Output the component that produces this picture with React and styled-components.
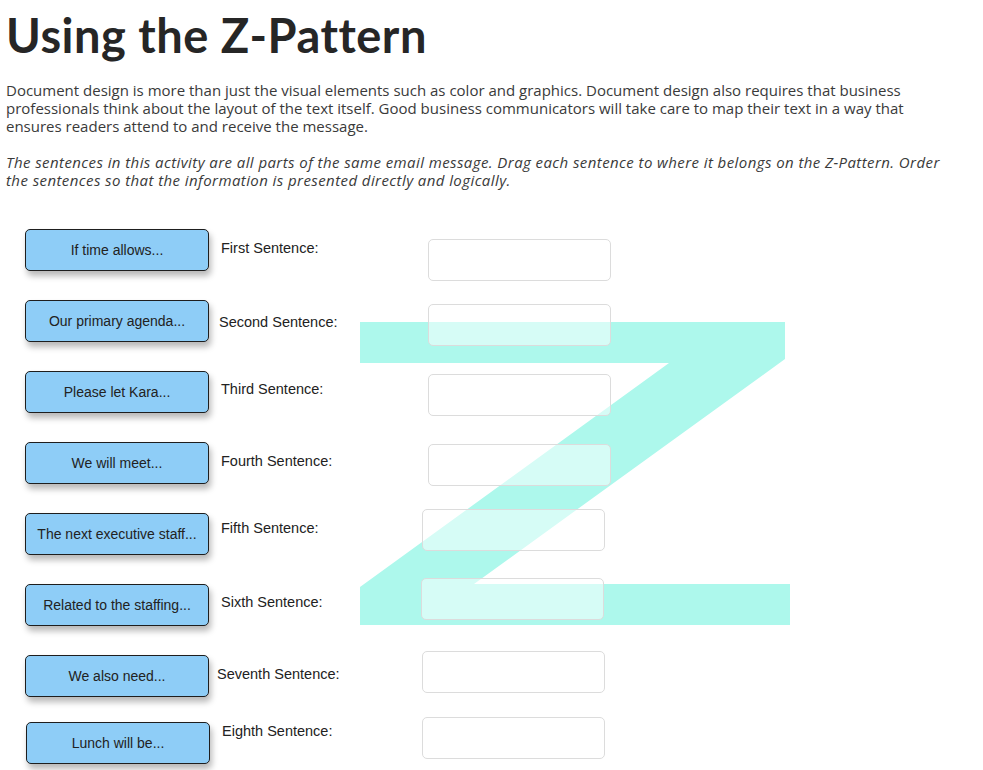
import React from "react";
import styled, { createGlobalStyle } from "styled-components";

const Global = createGlobalStyle`
  html, body { margin: 0; padding: 0; background: #fff; }
  body { font-family: "Open Sans", "Lato", sans-serif; color: #333; }
`;

const Page = styled.div`
  padding: 0 0 0 6px;
  width: 977px;
  height: 770px;
  overflow: hidden;
  box-sizing: border-box;
`;

const Title = styled.h1`
  margin: 0;
  padding-top: 9px;
  font-family: "Lato", sans-serif;
  font-weight: 700;
  font-size: 47px;
  line-height: 52px;
  color: #262626;
  letter-spacing: 0.5px;
`;

const Para = styled.p`
  margin: 20px 0 0 0;
  width: 955px;
  font-family: "Open Sans", sans-serif;
  font-size: 15px;
  line-height: 18px;
  color: #3a3a3a;
  font-style: ${(p) => (p.$italic ? "italic" : "normal")};
  letter-spacing: ${(p) => (p.$italic ? "0.42px" : "0")};
  & + & { margin-top: 18px; }
`;

const Activity = styled.div`
  position: relative;
  margin-top: 40px;
  margin-left: -6px;
`;

const ZShape = styled.svg`
  position: absolute;
  left: 360px;
  top: 93px;
  width: 430px;
  height: 303px;
  z-index: 0;
`;

const Row = styled.div`
  position: relative;
  z-index: 1;
  display: flex;
  align-items: flex-start;
  height: ${(p) => p.$h}px;
  padding-left: ${(p) => 25 + (p.$bx || 0)}px;
`;

const Chip = styled.div`
  flex: none;
  width: 182px;
  height: 40px;
  display: flex;
  align-items: center;
  justify-content: center;
  background: #8ecdf7;
  border: 1px solid #1e1e1e;
  border-radius: 5px;
  box-shadow: 2px 5px 6px rgba(0, 0, 0, 0.28);
  font-family: "Liberation Sans", Arial, sans-serif;
  font-size: 14px;
  color: #222;
  box-sizing: content-box;
`;

const Label = styled.div`
  flex: none;
  width: ${(p) => 207 - (p.$bx || 0) - (p.$lx || 0)}px;
  margin-left: ${(p) => 12 + (p.$lx || 0)}px;
  margin-top: ${(p) => p.$ly}px;
  font-family: "Liberation Sans", Arial, sans-serif;
  font-size: 14.5px;
  line-height: 16px;
  color: #222;
`;

const Drop = styled.div`
  flex: none;
  width: 181px;
  height: 40px;
  margin-left: ${(p) => p.$dx}px;
  margin-top: ${(p) => p.$dy}px;
  border: 1px solid #dcdcdc;
  border-radius: 5px;
  background: rgba(255, 255, 255, 0.5);
`;

const rows = [
  { chip: "If time allows...", label: "First Sentence:", h: 71, ly: 11, lx: 0, dx: 0, dy: 10 },
  { chip: "Our primary agenda...", label: "Second Sentence:", h: 71, ly: 14, lx: -2, dx: 0, dy: 4 },
  { chip: "Please let Kara...", label: "Third Sentence:", h: 71, ly: 10, lx: 0, dx: 0, dy: 3 },
  { chip: "We will meet...", label: "Fourth Sentence:", h: 71, ly: 11, lx: 0, dx: 0, dy: 2 },
  { chip: "The next executive staff...", label: "Fifth Sentence:", h: 71, ly: 7, lx: 0, dx: -6, dy: -4 },
  { chip: "Related to the staffing...", label: "Sixth Sentence:", h: 71, ly: 10, lx: 0, dx: -7, dy: -6 },
  { chip: "We also need...", label: "Seventh Sentence:", h: 67, ly: 11, lx: -4, dx: -6, dy: -4 },
  { chip: "Lunch will be...", label: "Eighth Sentence:", h: 48, ly: 1, lx: 0, dx: -6, dy: -5, bx: 1 },
];

export default function App() {
  return (
    <>
      <Global />
      <Page>
        <Title>Using the Z-Pattern</Title>
        <Para>
          Document design is more than just the visual elements such as color and graphics. Document design also requires that business professionals think about the layout of the text itself. Good business communicators will take care to map their text in a way that ensures readers attend to and receive the message.
        </Para>
        <Para $italic>
          The sentences in this activity are all parts of the same email message. Drag each sentence to where it belongs on the Z-Pattern. Order the sentences so that the information is presented directly and logically.
        </Para>
        <Activity>
          <ZShape viewBox="0 0 430 303" aria-hidden="true">
            <polygon
              points="0,0 425,0 425,37 114,262 430,262 430,303 0,303 0,265 309,41 0,41"
              fill="#adf8ec"
            />
          </ZShape>
          {rows.map((r) => (
            <Row key={r.label} $h={r.h} $bx={r.bx}>
              <Chip>{r.chip}</Chip>
              <Label $ly={r.ly} $lx={r.lx} $bx={r.bx}>{r.label}</Label>
              <Drop $dx={r.dx} $dy={r.dy} />
            </Row>
          ))}
        </Activity>
      </Page>
    </>
  );
}
